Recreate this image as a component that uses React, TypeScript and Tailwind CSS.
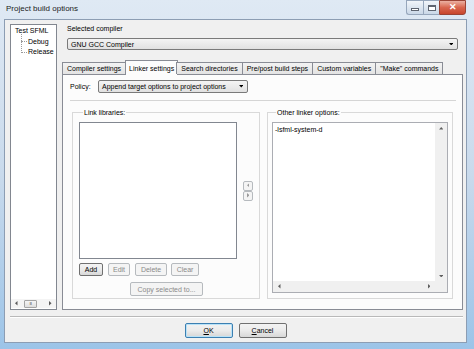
import type { ReactNode } from "react";

type BtnProps = {
  children: ReactNode;
  className?: string;
  disabled?: boolean;
  isDefault?: boolean;
};

const Btn = ({ children, className = "", disabled = false, isDefault = false }: BtnProps) => {
  let look = "border-[#707070] bg-linear-to-b from-[#f3f3f3] via-[#ebebeb] to-[#d8d8d8] text-black";
  if (disabled) look = "border-[#b6babe] bg-[#f4f4f4] text-[#8a8a8a]";
  if (isDefault)
    look =
      "border-[#3c7fb1] bg-linear-to-b from-[#f2f2f2] via-[#ebebeb] to-[#d6d6d6] text-black shadow-[inset_0_0_0_1px_#b8e2f8]";
  return (
    <div className={`flex items-center justify-center rounded-[2px] border text-[7px] leading-none ${look} ${className}`}>
      {children}
    </div>
  );
};

const Tri = ({ dir, className = "" }: { dir: "up" | "down" | "left" | "right"; className?: string }) => {
  const pts = {
    up: "0,4 3.5,0 7,4",
    down: "0,0 7,0 3.5,4",
    left: "4,0 4,7 0,3.5",
    right: "0,0 0,7 4,3.5",
  }[dir];
  const vb = dir === "up" || dir === "down" ? "0 0 7 4" : "0 0 4 7";
  const size = dir === "up" || dir === "down" ? "h-[2.5px] w-[4.5px]" : "h-[4.5px] w-[2.5px]";
  return (
    <svg viewBox={vb} className={`${size} ${className}`}>
      <polygon points={pts} fill="currentColor" />
    </svg>
  );
};

const Combo = ({ text, className = "" }: { text: string; className?: string }) => (
  <div
    className={`flex items-center justify-between rounded-[2px] border border-[#7a7a7a] bg-linear-to-b from-[#f4f4f4] to-[#e1e1e1] pl-[3px] pr-[4px] text-[7px] leading-none ${className}`}
  >
    <span>{text}</span>
    <Tri dir="down" className="text-black" />
  </div>
);

const tabs = [
  "Compiler settings",
  "Linker settings",
  "Search directories",
  "Pre/post build steps",
  "Custom variables",
  "\"Make\" commands",
];

export default function App() {
  return (
    <div className="flex h-[349px] w-[474px] flex-col overflow-hidden bg-linear-to-b from-[#dfe9f4] via-[#c9daec] to-[#9cc4e8] font-['Liberation_Sans',Arial,sans-serif] text-black">
      {/* title bar */}
      <div className="flex h-[19px] shrink-0 items-start justify-between pl-[6px] pr-[8px]">
        <span className="mt-[4px] text-[8px] leading-[10px] text-[#1b1b1b]">Project build options</span>
        <div className="flex h-[15px]">
          <div className="flex w-[17px] items-center justify-center rounded-bl-[3px] border border-r-0 border-[#96a6bb] bg-linear-to-b from-[#f1f5fa] via-[#dde6f0] to-[#cad8e8]">
            <div className="mt-[4px] h-[3px] w-[8px] border border-[#5d6470] bg-white" />
          </div>
          <div className="flex w-[16px] items-center justify-center border border-r-0 border-[#96a6bb] bg-linear-to-b from-[#f1f5fa] via-[#dde6f0] to-[#cad8e8]">
            <div className="h-[6px] w-[8px] border border-t-2 border-[#5d6470] bg-white" />
          </div>
          <div className="flex w-[27px] items-center justify-center rounded-br-[3px] border border-[#9a4436] bg-linear-to-b from-[#eab0a2] via-[#d8664f] to-[#c8452c] text-[9px] font-bold leading-none text-white">
            ✕
          </div>
        </div>
      </div>

      {/* client */}
      <div className="ml-[4px] mr-[7px] flex h-[324px] flex-col border border-[#8c9db3] bg-[#f0f0f0]">
        <div className="mt-[4px] flex h-[286px] gap-[5px] pl-[5px] pr-[3px]">
          {/* tree */}
          <div className="flex w-[47px] flex-col border border-[#828790] bg-white">
            <div className="pl-[4px] pt-[1px] text-[7px] leading-[10.5px]">
              <div>Test SFML</div>
              <div className="relative ml-[6px]">
                <div className="absolute left-0 top-[-3px] h-[19px] border-l border-dotted border-[#9a9a9a]" />
                <div className="flex items-center">
                  <span className="w-[6px] border-t border-dotted border-[#9a9a9a]" />
                  <span className="ml-[1px]">Debug</span>
                </div>
                <div className="flex items-center">
                  <span className="w-[6px] border-t border-dotted border-[#9a9a9a]" />
                  <span className="ml-[1px]">Release</span>
                </div>
              </div>
            </div>
            <div className="mb-[1px] mt-auto flex h-[9px] items-center bg-[#f4f4f4] text-[#5a5a5a]">
              <div className="flex w-[11px] justify-center">
                <Tri dir="left" />
              </div>
              <div className="ml-[2px] flex h-[8px] w-[13px] items-center justify-center rounded-[1px] border border-[#a4a4a4] bg-linear-to-b from-[#f5f5f5] to-[#dedede] text-[4px] leading-none tracking-[-0.5px]">
                III
              </div>
              <div className="flex-1" />
              <div className="flex w-[11px] justify-center">
                <Tri dir="right" />
              </div>
            </div>
          </div>

          {/* main */}
          <div className="flex flex-1 flex-col">
            <div className="pl-[5px] text-[7px] leading-[9px]">Selected compiler</div>
            <Combo text="GNU GCC Compiler" className="mx-[5px] mt-[5px] h-[13px]" />

            <div className="relative z-10 -mb-[1px] mt-[10px] flex h-[15px] items-end">
              {tabs.map((t, i) =>
                i === 1 ? (
                  <div
                    key={t}
                    className="-mx-[1px] flex h-[15px] items-center border border-b-0 border-[#898c95] bg-[#fcfcfc] px-[3px] text-[7px] leading-none"
                  >
                    {t}
                  </div>
                ) : (
                  <div
                    key={t}
                    className={`mb-[1px] flex h-[12px] items-center border border-b-0 border-[#898c95] bg-linear-to-b from-[#f3f3f3] to-[#e3e3e3] px-[4px] text-[7px] leading-none ${i > 0 ? "-ml-[1px]" : ""}`}
                  >
                    {t}
                  </div>
                ),
              )}
            </div>

            {/* tab panel */}
            <div className="flex flex-1 flex-col border border-[#898c95] bg-[#fcfcfc] pb-[10px]">
              <div className="mt-[5px] flex h-[13px] items-center pl-[7px]">
                <span className="w-[28px] text-[7px] leading-none">Policy:</span>
                <Combo text="Append target options to project options" className="h-[13px] w-[150px]" />
              </div>
              <div className="ml-[7px] mr-[6px] mt-[7px] border-t border-[#d5d5d5]" />

              <div className="mt-[7px] flex flex-1 gap-[7px] px-[9px]">
                {/* link libraries */}
                <fieldset className="flex w-[188px] flex-col border border-[#d9d9d9] pb-[2px] pl-[6px]">
                  <legend className="ml-[4px] px-[1px] text-[7px] leading-[9px]">Link libraries:</legend>
                  <div className="mt-[5px] flex items-center">
                    <div className="h-[137px] w-[158px] border border-[#828790] bg-white" />
                    <div className="ml-[6px] flex flex-col">
                      <Btn disabled className="h-[10px] w-[10px]">
                        <Tri dir="left" className="text-[#9a9a9a]" />
                      </Btn>
                      <Btn disabled className="h-[10px] w-[10px]">
                        <Tri dir="right" className="text-[#9a9a9a]" />
                      </Btn>
                    </div>
                  </div>
                  <div className="mt-[4px] flex">
                    <Btn className="h-[13px] w-[24px]">Add</Btn>
                    <Btn disabled className="ml-[5px] h-[13px] w-[22px]">
                      Edit
                    </Btn>
                    <Btn disabled className="ml-[5px] h-[13px] w-[32px]">
                      Delete
                    </Btn>
                    <Btn disabled className="ml-[4px] h-[13px] w-[28px]">
                      Clear
                    </Btn>
                  </div>
                  <Btn disabled className="ml-[51px] mt-[6px] h-[14px] w-[73px]">
                    Copy selected to...
                  </Btn>
                </fieldset>

                {/* other linker options */}
                <fieldset className="flex flex-1 flex-col border border-[#d9d9d9] px-[4px] pb-[5px]">
                  <legend className="ml-[4px] px-[1px] text-[7px] leading-[9px]">Other linker options:</legend>
                  <div className="mt-[5px] flex flex-1 flex-col border border-[#abadb3] bg-white">
                    <div className="flex flex-1">
                      <div className="flex-1 pl-[2px] pt-[3px] text-[7px] leading-none">-lsfml-system-d</div>
                      <div className="flex w-[12px] flex-col items-center justify-between bg-[#f0f0f0] py-[4px] text-[#606060]">
                        <Tri dir="up" />
                        <Tri dir="down" />
                      </div>
                    </div>
                    <div className="flex h-[11px]">
                      <div className="flex flex-1 items-center justify-between bg-[#f0f0f0] px-[5px] text-[#606060]">
                        <Tri dir="left" />
                        <Tri dir="right" />
                      </div>
                      <div className="w-[12px] bg-[#f0f0f0]" />
                    </div>
                  </div>
                </fieldset>
              </div>
            </div>
          </div>
        </div>

        {/* separator */}
        <div className="ml-[5px] mr-[3px] mt-[6px] border-b border-t border-b-white border-t-[#b9b9b9]" />

        {/* dialog buttons */}
        <div className="mt-[5px] flex justify-center gap-[6px]">
          <Btn isDefault className="h-[15px] w-[48px]">
            <span>
              <u>O</u>K
            </span>
          </Btn>
          <Btn className="h-[15px] w-[48px]">
            <span>
              <u>C</u>ancel
            </span>
          </Btn>
        </div>
      </div>
    </div>
  );
}
